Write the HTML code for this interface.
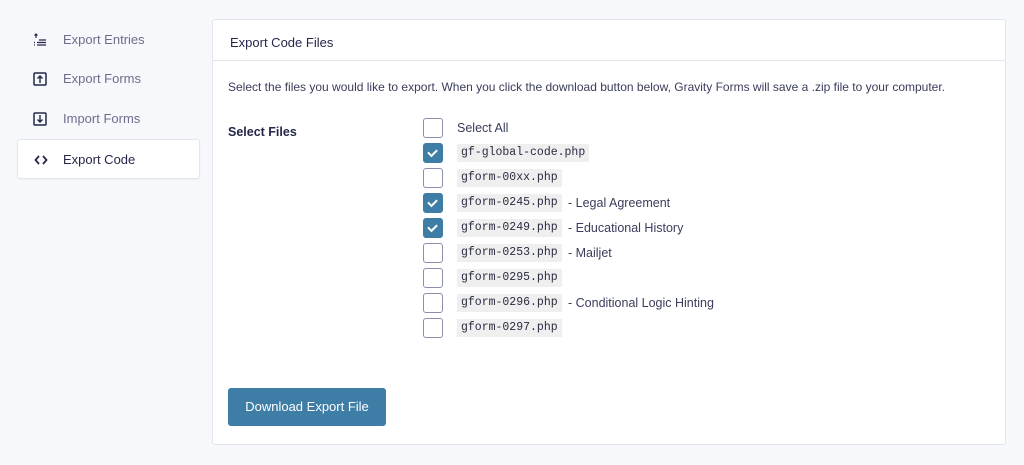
<!DOCTYPE html>
<html><head><style>
body{margin:0;width:1024px;height:465px;background:#f6f8fb;font-family:"Liberation Sans",sans-serif;position:relative;overflow:hidden;color:#242748}
.nav{position:absolute;left:17px;width:181px;height:38px;font-size:13px;color:#6b6e8c}
.nav span{position:absolute;left:46px;top:12px}
.nav svg{position:absolute;left:16px;top:13px}
.act{background:#fff;border:1px solid #e3e6ee;border-radius:3px;color:#242748;box-shadow:0 1px 2px rgba(0,0,0,.04)}
.panel{position:absolute;left:212px;top:19px;width:792px;height:424px;background:#fff;border:1px solid #e3e6ee;border-radius:3px}
.hd{height:41px;border-bottom:1px solid #e3e6ee;font-size:13px;padding:15px 0 0 17px;box-sizing:border-box}
.row{position:absolute;left:210px;height:20px;font-size:12.5px;color:#3a3d5c}
.cb{position:absolute;left:0;top:0;width:18px;height:18px;border:1px solid #8c8fa8;border-radius:3px;background:#fff}
.cb.on{background:#3e7da6;border-color:#3e7da6}
.cb.on::after{content:"";position:absolute;width:7px;height:4px;border-left:2px solid #fff;border-bottom:2px solid #fff;transform:rotate(-45deg);top:5px;left:4px}
.code{position:absolute;left:34px;top:1px;background:#efefef;font-family:"Liberation Mono",monospace;font-size:11.5px;padding:2px 4px 3px;color:#2a2c40;white-space:nowrap}
.lbl{position:absolute;top:3px;white-space:nowrap}
.btn{position:absolute;left:15px;top:368px;width:158px;height:38px;background:#3e7da6;border-radius:3px;color:#fff;font-size:13px;text-align:center;line-height:38px}
</style></head><body>
<div class="nav" style="top:20px"><svg width="14" height="14" viewBox="0 0 14 14"><path d="M3 1v4M1.5 2.5L3 1l1.5 1.5M6 7h7M1 9.5h1M4 9.5h9M1 12h1M4 12h9" stroke="#242748" stroke-width="1.2" fill="none"/></svg><span>Export Entries</span></div>
<div class="nav" style="top:59px"><svg width="14" height="14" viewBox="0 0 14 14"><rect x="1" y="1" width="12" height="12" rx="1" stroke="#242748" stroke-width="1.5" fill="none"/><path d="M7 11V4M4.5 6.5L7 4l2.5 2.5" stroke="#242748" stroke-width="1.4" fill="none"/></svg><span>Export Forms</span></div>
<div class="nav" style="top:99px"><svg width="14" height="14" viewBox="0 0 14 14"><rect x="1" y="1" width="12" height="12" rx="1" stroke="#242748" stroke-width="1.5" fill="none"/><path d="M7 3v7M4.5 7.5L7 10l2.5-2.5" stroke="#242748" stroke-width="1.4" fill="none"/></svg><span>Import Forms</span></div>
<div class="nav act" style="top:139px"><svg width="14" height="14" viewBox="0 0 14 14"><path d="M5 3L1.5 7 5 11M9 3l3.5 4L9 11" stroke="#242748" stroke-width="1.8" fill="none"/></svg><span style="left:45px">Export Code</span></div>
<div class="panel">
<div class="hd">Export Code Files</div>
<div style="position:absolute;left:15px;top:60px;font-size:12px;color:#3a3d5c;white-space:nowrap">Select the files you would like to export. When you click the download button below, Gravity Forms will save a .zip file to your computer.</div>
<div style="position:absolute;left:15px;top:105px;font-size:12.5px;font-weight:bold;color:#242748">Select Files</div>
<div class="row" style="top:98px"><div class="cb"></div><span class="lbl" style="left:34px">Select All</span></div>
<div class="row" style="top:123px"><div class="cb on"></div><span class="code">gf-global-code.php</span></div>
<div class="row" style="top:148px"><div class="cb"></div><span class="code">gform-00xx.php</span></div>
<div class="row" style="top:173px"><div class="cb on"></div><span class="code">gform-0245.php</span><span class="lbl" style="left:145px">- Legal Agreement</span></div>
<div class="row" style="top:198px"><div class="cb on"></div><span class="code">gform-0249.php</span><span class="lbl" style="left:145px">- Educational History</span></div>
<div class="row" style="top:223px"><div class="cb"></div><span class="code">gform-0253.php</span><span class="lbl" style="left:145px">- Mailjet</span></div>
<div class="row" style="top:248px"><div class="cb"></div><span class="code">gform-0295.php</span></div>
<div class="row" style="top:273px"><div class="cb"></div><span class="code">gform-0296.php</span><span class="lbl" style="left:145px">- Conditional Logic Hinting</span></div>
<div class="row" style="top:298px"><div class="cb"></div><span class="code">gform-0297.php</span></div>
<div class="btn">Download Export File</div>
</div>
</body></html>
